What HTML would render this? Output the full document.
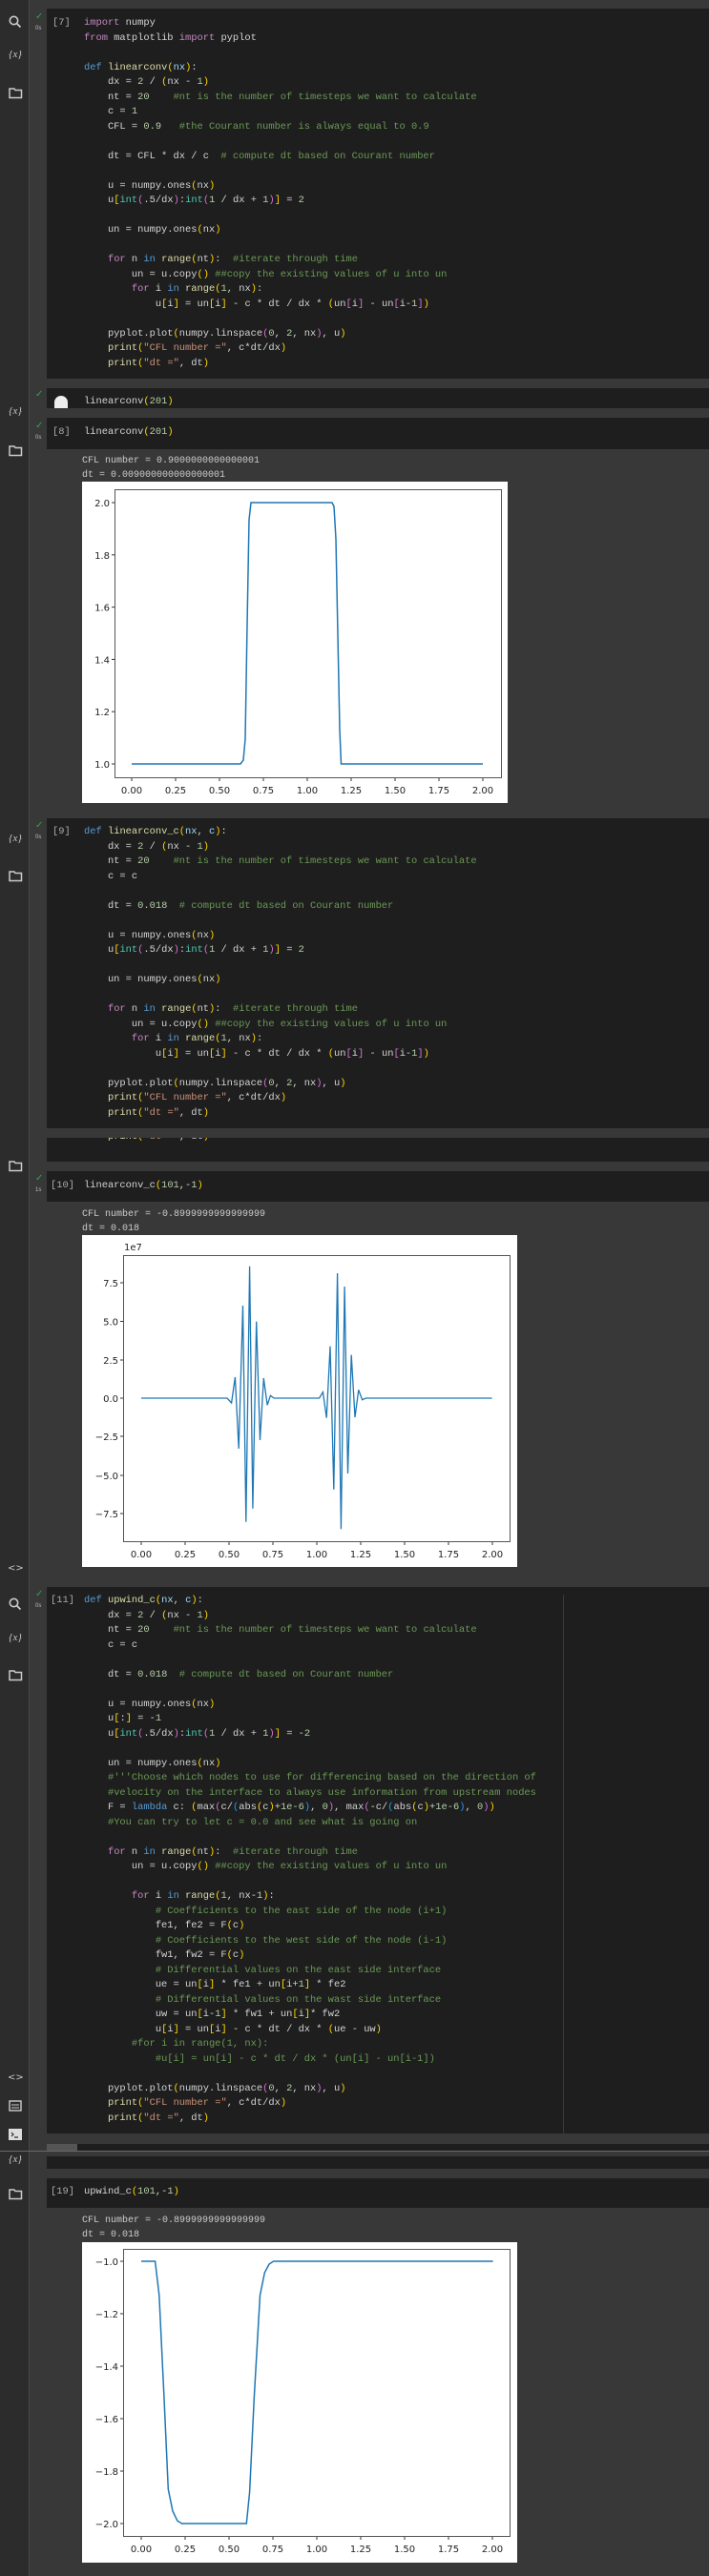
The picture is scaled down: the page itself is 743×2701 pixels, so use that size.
<!DOCTYPE html>
<html><head><meta charset="utf-8">
<style>
*{margin:0;padding:0;box-sizing:border-box}
body{width:743px;height:2701px;background:#383838;position:relative;overflow:hidden;font-family:"Liberation Mono","DejaVu Sans Mono",monospace;color:#d4d4d4}
.side{position:absolute;left:0;top:0;width:31px;height:2701px;background:#2c2c2c;border-right:1px solid #474747}
.cell{position:absolute;left:49px;right:0;background:#1e1e1e;overflow:hidden}
pre{position:absolute;left:88px;font-family:"Liberation Mono","DejaVu Sans Mono",monospace;font-size:10.4px;line-height:15.5px;color:#d4d4d4;white-space:pre}
.pr{position:absolute;left:55px;font-size:10.4px;line-height:15.5px;color:#aaa}
.chk{position:absolute;left:37px;font-size:10px;color:#2fa44f;font-family:"DejaVu Sans",sans-serif}
.tm{position:absolute;left:37px;font-size:6px;color:#bbb;font-family:"Liberation Sans",sans-serif}
.out{position:absolute;left:86px;font-size:10px;line-height:15px;color:#ccc;white-space:pre}
.ic{position:absolute;left:8px;width:16px;text-align:center;color:#c8c8c8;font-size:11px;font-family:"Liberation Serif",serif;font-style:italic}
.k{color:#c586c0}.d{color:#569cd6}.c{color:#6a9955}.f{color:#dcdcaa}.n{color:#b5cea8}.s{color:#ce9178}.t{color:#4ec9b0}
.b1{color:#ffd700}.b2{color:#da70d6}.b3{color:#179fff}.v{color:#9cdcfe}
.plot{position:absolute;background:#fff}
svg text{font-family:"DejaVu Sans","Liberation Sans",sans-serif;font-size:10px;fill:#222}
</style></head><body>
<div class="side"></div>

<svg style="position:absolute;left:8px;top:15px" width="16" height="16"><circle cx="6.5" cy="6.5" r="4.2" fill="none" stroke="#ccc" stroke-width="1.6"/><line x1="9.5" y1="9.5" x2="13.5" y2="13.5" stroke="#ccc" stroke-width="1.8"/></svg>
<div class="ic" style="top:51px">{x}</div>
<svg style="position:absolute;left:9px;top:91px" width="15" height="13"><path d="M1 2h5l1 1.5h6.5v8H1z" fill="none" stroke="#ccc" stroke-width="1.5"/></svg>
<div class="ic" style="top:425px">{x}</div>
<svg style="position:absolute;left:9px;top:466px" width="15" height="13"><path d="M1 2h5l1 1.5h6.5v8H1z" fill="none" stroke="#ccc" stroke-width="1.5"/></svg>
<div class="ic" style="top:873px">{x}</div>
<svg style="position:absolute;left:9px;top:912px" width="15" height="13"><path d="M1 2h5l1 1.5h6.5v8H1z" fill="none" stroke="#ccc" stroke-width="1.5"/></svg>
<svg style="position:absolute;left:9px;top:1216px" width="15" height="13"><path d="M1 2h5l1 1.5h6.5v8H1z" fill="none" stroke="#ccc" stroke-width="1.5"/></svg>
<div class="ic" style="top:1639px;font-style:normal;font-family:'DejaVu Sans',sans-serif;font-size:10px">&lt;&gt;</div>
<svg style="position:absolute;left:8px;top:1674px" width="16" height="16"><circle cx="6.5" cy="6.5" r="4.2" fill="none" stroke="#ccc" stroke-width="1.6"/><line x1="9.5" y1="9.5" x2="13.5" y2="13.5" stroke="#ccc" stroke-width="1.8"/></svg>
<div class="ic" style="top:1711px">{x}</div>
<svg style="position:absolute;left:9px;top:1750px" width="15" height="13"><path d="M1 2h5l1 1.5h6.5v8H1z" fill="none" stroke="#ccc" stroke-width="1.5"/></svg>
<div class="ic" style="top:2173px;font-style:normal;font-family:'DejaVu Sans',sans-serif;font-size:10px">&lt;&gt;</div>
<svg style="position:absolute;left:9px;top:2202px" width="14" height="12"><rect x="1" y="1" width="12" height="10" fill="none" stroke="#ccc" stroke-width="1.4"/><line x1="3" y1="5" x2="11" y2="5" stroke="#ccc"/><line x1="3" y1="8" x2="11" y2="8" stroke="#ccc"/></svg>
<svg style="position:absolute;left:9px;top:2232px" width="14" height="12"><rect x="0" y="0" width="14" height="12" fill="#ddd"/><path d="M3 4l2 2-2 2M6 9h4" stroke="#2c2c2c" stroke-width="1.2" fill="none"/></svg>
<div class="ic" style="top:2258px">{x}</div>
<svg style="position:absolute;left:9px;top:2294px" width="15" height="13"><path d="M1 2h5l1 1.5h6.5v8H1z" fill="none" stroke="#ccc" stroke-width="1.5"/></svg>

<!-- CELL 7 -->
<div class="cell" style="top:9px;height:388px"></div>
<div class="chk" style="top:12px">✓</div><div class="tm" style="top:27px">0s</div>
<div class="pr" style="top:17px">[7]</div>
<pre style="top:17px"><span class="k">import</span> numpy
<span class="k">from</span> matplotlib <span class="k">import</span> pyplot

<span class="d">def</span> <span class="f">linearconv</span><span class="b1">(</span><span class="v">nx</span><span class="b1">)</span>:
    dx = <span class="n">2</span> / <span class="b1">(</span>nx - <span class="n">1</span><span class="b1">)</span>
    nt = <span class="n">20</span>    <span class="c">#nt is the number of timesteps we want to calculate</span>
    c = <span class="n">1</span>
    CFL = <span class="n">0.9</span>   <span class="c">#the Courant number is always equal to 0.9</span>

    dt = CFL * dx / c  <span class="c"># compute dt based on Courant number</span>

    u = numpy.ones<span class="b1">(</span>nx<span class="b1">)</span>
    u<span class="b1">[</span><span class="t">int</span><span class="b2">(</span>.5/dx<span class="b2">)</span>:<span class="t">int</span><span class="b2">(</span><span class="n">1</span> / dx + <span class="n">1</span><span class="b2">)</span><span class="b1">]</span> = <span class="n">2</span>

    un = numpy.ones<span class="b1">(</span>nx<span class="b1">)</span>

    <span class="k">for</span> n <span class="d">in</span> <span class="f">range</span><span class="b1">(</span>nt<span class="b1">)</span>:  <span class="c">#iterate through time</span>
        un = u.copy<span class="b1">()</span> <span class="c">##copy the existing values of u into un</span>
        <span class="k">for</span> i <span class="d">in</span> <span class="f">range</span><span class="b1">(</span><span class="n">1</span>, nx<span class="b1">)</span>:
            u<span class="b1">[</span>i<span class="b1">]</span> = un<span class="b1">[</span>i<span class="b1">]</span> - c * dt / dx * <span class="b1">(</span>un<span class="b2">[</span>i<span class="b2">]</span> - un<span class="b2">[</span>i-<span class="n">1</span><span class="b2">]</span><span class="b1">)</span>

    pyplot.plot<span class="b1">(</span>numpy.linspace<span class="b2">(</span><span class="n">0</span>, <span class="n">2</span>, nx<span class="b2">)</span>, u<span class="b1">)</span>
    <span class="f">print</span><span class="b1">(</span><span class="s">"CFL number ="</span>, c*dt/dx<span class="b1">)</span>
    <span class="f">print</span><span class="b1">(</span><span class="s">"dt ="</span>, dt<span class="b1">)</span></pre>

<div class="cell" style="top:407px;height:21px"><pre style="left:39px;top:7px">linearconv<span class="b1">(</span><span class="n">201</span><span class="b1">)</span></pre></div>
<div class="chk" style="top:408px">✓</div>
<div style="position:absolute;left:57px;top:415px;width:14px;height:13px;border-radius:7px 7px 0 0;background:#eee"></div>

<!-- CELL 8 -->
<div class="cell" style="top:438px;height:33px"></div>
<div class="chk" style="top:441px">✓</div><div class="tm" style="top:456px">0s</div>
<div class="pr" style="top:446px">[8]</div>
<pre style="top:446px">linearconv<span class="b1">(</span><span class="n">201</span><span class="b1">)</span></pre>
<div class="out" style="top:476px">CFL number = 0.9000000000000001
dt = 0.009000000000000001</div>
<div class="plot" style="left:86px;top:505px;width:446px;height:337px">
<svg width="446" height="337">
<rect x="34.5" y="8.5" width="405" height="302" fill="none" stroke="#555" stroke-width="1"/>
<g stroke="#333"><line x1="31" x2="34" y1="22" y2="22"/><line x1="31" x2="34" y1="76.8" y2="76.8"/><line x1="31" x2="34" y1="131.6" y2="131.6"/><line x1="31" x2="34" y1="186.4" y2="186.4"/><line x1="31" x2="34" y1="241.2" y2="241.2"/><line x1="31" x2="34" y1="296" y2="296"/>
<line y1="311" y2="314" x1="52" x2="52"/><line y1="311" y2="314" x1="98" x2="98"/><line y1="311" y2="314" x1="144" x2="144"/><line y1="311" y2="314" x1="190" x2="190"/><line y1="311" y2="314" x1="236" x2="236"/><line y1="311" y2="314" x1="282" x2="282"/><line y1="311" y2="314" x1="328" x2="328"/><line y1="311" y2="314" x1="374" x2="374"/><line y1="311" y2="314" x1="420" x2="420"/></g>
<g text-anchor="end"><text x="29" y="26">2.0</text><text x="29" y="80.8">1.8</text><text x="29" y="135.6">1.6</text><text x="29" y="190.4">1.4</text><text x="29" y="245.2">1.2</text><text x="29" y="300">1.0</text></g>
<g text-anchor="middle"><text x="52" y="327">0.00</text><text x="98" y="327">0.25</text><text x="144" y="327">0.50</text><text x="190" y="327">0.75</text><text x="236" y="327">1.00</text><text x="282" y="327">1.25</text><text x="328" y="327">1.50</text><text x="374" y="327">1.75</text><text x="420" y="327">2.00</text></g>
<polyline fill="none" stroke="#1f77b4" stroke-width="1.5" points="52,296 166,296 169,292 171,270 173,150 175,40 177,22 180,22 262,22 264,26 266,60 268,160 270,260 271.5,296 420,296"/>
</svg></div>

<!-- CELL 9 -->
<div class="cell" style="top:858px;height:325px"></div>
<div class="chk" style="top:860px">✓</div><div class="tm" style="top:875px">0s</div>
<div class="pr" style="top:865px">[9]</div>
<pre style="top:865px"><span class="d">def</span> <span class="f">linearconv_c</span><span class="b1">(</span><span class="v">nx</span>, <span class="v">c</span><span class="b1">)</span>:
    dx = <span class="n">2</span> / <span class="b1">(</span>nx - <span class="n">1</span><span class="b1">)</span>
    nt = <span class="n">20</span>    <span class="c">#nt is the number of timesteps we want to calculate</span>
    c = c

    dt = <span class="n">0.018</span>  <span class="c"># compute dt based on Courant number</span>

    u = numpy.ones<span class="b1">(</span>nx<span class="b1">)</span>
    u<span class="b1">[</span><span class="t">int</span><span class="b2">(</span>.5/dx<span class="b2">)</span>:<span class="t">int</span><span class="b2">(</span><span class="n">1</span> / dx + <span class="n">1</span><span class="b2">)</span><span class="b1">]</span> = <span class="n">2</span>

    un = numpy.ones<span class="b1">(</span>nx<span class="b1">)</span>

    <span class="k">for</span> n <span class="d">in</span> <span class="f">range</span><span class="b1">(</span>nt<span class="b1">)</span>:  <span class="c">#iterate through time</span>
        un = u.copy<span class="b1">()</span> <span class="c">##copy the existing values of u into un</span>
        <span class="k">for</span> i <span class="d">in</span> <span class="f">range</span><span class="b1">(</span><span class="n">1</span>, nx<span class="b1">)</span>:
            u<span class="b1">[</span>i<span class="b1">]</span> = un<span class="b1">[</span>i<span class="b1">]</span> - c * dt / dx * <span class="b1">(</span>un<span class="b2">[</span>i<span class="b2">]</span> - un<span class="b2">[</span>i-<span class="n">1</span><span class="b2">]</span><span class="b1">)</span>

    pyplot.plot<span class="b1">(</span>numpy.linspace<span class="b2">(</span><span class="n">0</span>, <span class="n">2</span>, nx<span class="b2">)</span>, u<span class="b1">)</span>
    <span class="f">print</span><span class="b1">(</span><span class="s">"CFL number ="</span>, c*dt/dx<span class="b1">)</span>
    <span class="f">print</span><span class="b1">(</span><span class="s">"dt ="</span>, dt<span class="b1">)</span></pre>

<div class="cell" style="top:1193px;height:25px"><pre style="left:39px;top:-8px">    <span class="f">print</span><span class="b1">(</span><span class="s">"dt ="</span>, dt<span class="b1">)</span></pre></div>

<!-- CELL 10 -->
<div class="cell" style="top:1228px;height:32px"></div>
<div class="chk" style="top:1230px">✓</div><div class="tm" style="top:1245px">1s</div>
<div class="pr" style="top:1236px;left:53px">[10]</div>
<pre style="top:1236px">linearconv_c<span class="b1">(</span><span class="n">101</span>,-<span class="n">1</span><span class="b1">)</span></pre>
<div class="out" style="top:1266px">CFL number = -0.8999999999999999
dt = 0.018</div>
<div class="plot" style="left:86px;top:1295px;width:456px;height:348px">
<svg width="456" height="348">
<rect x="43.5" y="21.5" width="405" height="300" fill="none" stroke="#555"/>
<text x="44" y="16">1e7</text>
<g stroke="#333"><line x1="40" x2="43" y1="50" y2="50"/><line x1="40" x2="43" y1="90.5" y2="90.5"/><line x1="40" x2="43" y1="131" y2="131"/><line x1="40" x2="43" y1="171" y2="171"/><line x1="40" x2="43" y1="211" y2="211"/><line x1="40" x2="43" y1="252" y2="252"/><line x1="40" x2="43" y1="292" y2="292"/>
<line y1="322" y2="325" x1="62" x2="62"/><line y1="322" y2="325" x1="108" x2="108"/><line y1="322" y2="325" x1="154" x2="154"/><line y1="322" y2="325" x1="200" x2="200"/><line y1="322" y2="325" x1="246" x2="246"/><line y1="322" y2="325" x1="292" x2="292"/><line y1="322" y2="325" x1="338" x2="338"/><line y1="322" y2="325" x1="384" x2="384"/><line y1="322" y2="325" x1="430" x2="430"/></g>
<g text-anchor="end"><text x="38" y="54">7.5</text><text x="38" y="94.5">5.0</text><text x="38" y="135">2.5</text><text x="38" y="175">0.0</text><text x="38" y="215">−2.5</text><text x="38" y="256">−5.0</text><text x="38" y="296">−7.5</text></g>
<g text-anchor="middle"><text x="62" y="338">0.00</text><text x="108" y="338">0.25</text><text x="154" y="338">0.50</text><text x="200" y="338">0.75</text><text x="246" y="338">1.00</text><text x="292" y="338">1.25</text><text x="338" y="338">1.50</text><text x="384" y="338">1.75</text><text x="430" y="338">2.00</text></g>
<polyline fill="none" stroke="#1f77b4" stroke-width="1.3" points="62,171 152,171 156.6,176 160.4,149 164.2,224 168.5,74 171.8,300.7 175.6,32.7 178.9,286.7 182.7,90.7 186.5,215 190.3,150 194.1,178.3 197.4,168.3 201.2,171 248.6,171 252.4,164.7 256.2,191.7 260,116.7 263.8,266.7 267.6,40 271.4,308.3 275.1,54 278.5,250 282.2,125.7 286,191 289.8,162.3 293.6,172.7 297.4,171 429.6,171"/>
</svg></div>

<!-- CELL 11 -->
<div class="cell" style="top:1664px;height:573px"></div>
<div style="position:absolute;left:590px;top:1672px;width:1px;height:565px;background:#3a3a3a"></div>
<div class="chk" style="top:1666px">✓</div><div class="tm" style="top:1681px">0s</div>
<div class="pr" style="top:1671px;left:53px">[11]</div>
<pre style="top:1671px"><span class="d">def</span> <span class="f">upwind_c</span><span class="b1">(</span><span class="v">nx</span>, <span class="v">c</span><span class="b1">)</span>:
    dx = <span class="n">2</span> / <span class="b1">(</span>nx - <span class="n">1</span><span class="b1">)</span>
    nt = <span class="n">20</span>    <span class="c">#nt is the number of timesteps we want to calculate</span>
    c = c

    dt = <span class="n">0.018</span>  <span class="c"># compute dt based on Courant number</span>

    u = numpy.ones<span class="b1">(</span>nx<span class="b1">)</span>
    u<span class="b1">[</span>:<span class="b1">]</span> = -<span class="n">1</span>
    u<span class="b1">[</span><span class="t">int</span><span class="b2">(</span>.5/dx<span class="b2">)</span>:<span class="t">int</span><span class="b2">(</span><span class="n">1</span> / dx + <span class="n">1</span><span class="b2">)</span><span class="b1">]</span> = -<span class="n">2</span>

    un = numpy.ones<span class="b1">(</span>nx<span class="b1">)</span>
    <span class="c">#'''Choose which nodes to use for differencing based on the direction of</span>
    <span class="c">#velocity on the interface to always use information from upstream nodes</span>
    F = <span class="d">lambda</span> c: <span class="b1">(</span>max<span class="b2">(</span>c/<span class="b3">(</span>abs<span class="b1">(</span>c<span class="b1">)</span>+<span class="n">1e-6</span><span class="b3">)</span>, <span class="n">0</span><span class="b2">)</span>, max<span class="b2">(</span>-c/<span class="b3">(</span>abs<span class="b1">(</span>c<span class="b1">)</span>+<span class="n">1e-6</span><span class="b3">)</span>, <span class="n">0</span><span class="b2">)</span><span class="b1">)</span>
    <span class="c">#You can try to let c = 0.0 and see what is going on</span>

    <span class="k">for</span> n <span class="d">in</span> <span class="f">range</span><span class="b1">(</span>nt<span class="b1">)</span>:  <span class="c">#iterate through time</span>
        un = u.copy<span class="b1">()</span> <span class="c">##copy the existing values of u into un</span>

        <span class="k">for</span> i <span class="d">in</span> <span class="f">range</span><span class="b1">(</span><span class="n">1</span>, nx-<span class="n">1</span><span class="b1">)</span>:
            <span class="c"># Coefficients to the east side of the node (i+1)</span>
            fe1, fe2 = F<span class="b1">(</span>c<span class="b1">)</span>
            <span class="c"># Coefficients to the west side of the node (i-1)</span>
            fw1, fw2 = F<span class="b1">(</span>c<span class="b1">)</span>
            <span class="c"># Differential values on the east side interface</span>
            ue = un<span class="b1">[</span>i<span class="b1">]</span> * fe1 + un<span class="b1">[</span>i+<span class="n">1</span><span class="b1">]</span> * fe2
            <span class="c"># Differential values on the wast side interface</span>
            uw = un<span class="b1">[</span>i-<span class="n">1</span><span class="b1">]</span> * fw1 + un<span class="b1">[</span>i<span class="b1">]</span>* fw2
            u<span class="b1">[</span>i<span class="b1">]</span> = un<span class="b1">[</span>i<span class="b1">]</span> - c * dt / dx * <span class="b1">(</span>ue - uw<span class="b1">)</span>
        <span class="c">#for i in range(1, nx):</span>
            <span class="c">#u[i] = un[i] - c * dt / dx * (un[i] - un[i-1])</span>

    pyplot.plot<span class="b1">(</span>numpy.linspace<span class="b2">(</span><span class="n">0</span>, <span class="n">2</span>, nx<span class="b2">)</span>, u<span class="b1">)</span>
    <span class="f">print</span><span class="b1">(</span><span class="s">"CFL number ="</span>, c*dt/dx<span class="b1">)</span>
    <span class="f">print</span><span class="b1">(</span><span class="s">"dt ="</span>, dt<span class="b1">)</span></pre>

<div style="position:absolute;left:49px;top:2248px;width:694px;height:7px;background:#1e1e1e"></div>
<div style="position:absolute;left:49px;top:2248px;width:32px;height:7px;background:#555"></div>
<div style="position:absolute;left:0;top:2255px;width:743px;height:1px;background:#6a6a6a"></div>
<div class="cell" style="top:2261px;height:13px"></div>

<!-- CELL 19 -->
<div class="cell" style="top:2284px;height:31px"></div>
<div class="pr" style="top:2291px;left:53px">[19]</div>
<pre style="top:2291px">upwind_c<span class="b1">(</span><span class="n">101</span>,-<span class="n">1</span><span class="b1">)</span></pre>
<div class="out" style="top:2321px">CFL number = -0.8999999999999999
dt = 0.018</div>
<div class="plot" style="left:86px;top:2351px;width:456px;height:336px">
<svg width="456" height="336">
<rect x="43.5" y="7.5" width="405" height="301" fill="none" stroke="#555"/>
<g stroke="#333"><line x1="40" x2="43" y1="20" y2="20"/><line x1="40" x2="43" y1="75" y2="75"/><line x1="40" x2="43" y1="130" y2="130"/><line x1="40" x2="43" y1="185" y2="185"/><line x1="40" x2="43" y1="240" y2="240"/><line x1="40" x2="43" y1="295" y2="295"/>
<line y1="309" y2="312" x1="62" x2="62"/><line y1="309" y2="312" x1="108" x2="108"/><line y1="309" y2="312" x1="154" x2="154"/><line y1="309" y2="312" x1="200" x2="200"/><line y1="309" y2="312" x1="246" x2="246"/><line y1="309" y2="312" x1="292" x2="292"/><line y1="309" y2="312" x1="338" x2="338"/><line y1="309" y2="312" x1="384" x2="384"/><line y1="309" y2="312" x1="430" x2="430"/></g>
<g text-anchor="end"><text x="38" y="24">−1.0</text><text x="38" y="79">−1.2</text><text x="38" y="134">−1.4</text><text x="38" y="189">−1.6</text><text x="38" y="244">−1.8</text><text x="38" y="299">−2.0</text></g>
<g text-anchor="middle"><text x="62" y="325">0.00</text><text x="108" y="325">0.25</text><text x="154" y="325">0.50</text><text x="200" y="325">0.75</text><text x="246" y="325">1.00</text><text x="292" y="325">1.25</text><text x="338" y="325">1.50</text><text x="384" y="325">1.75</text><text x="430" y="325">2.00</text></g>
<polyline fill="none" stroke="#1f77b4" stroke-width="1.5" points="62,20 76.6,20 80.8,55.7 85.6,155.7 90.3,259 95,282 99.8,292 104.5,295 172.3,295 175.6,262 180.4,162 186.5,55.7 191.3,32 196,23 200.7,20 430.6,20"/>
</svg></div>
</body></html>
